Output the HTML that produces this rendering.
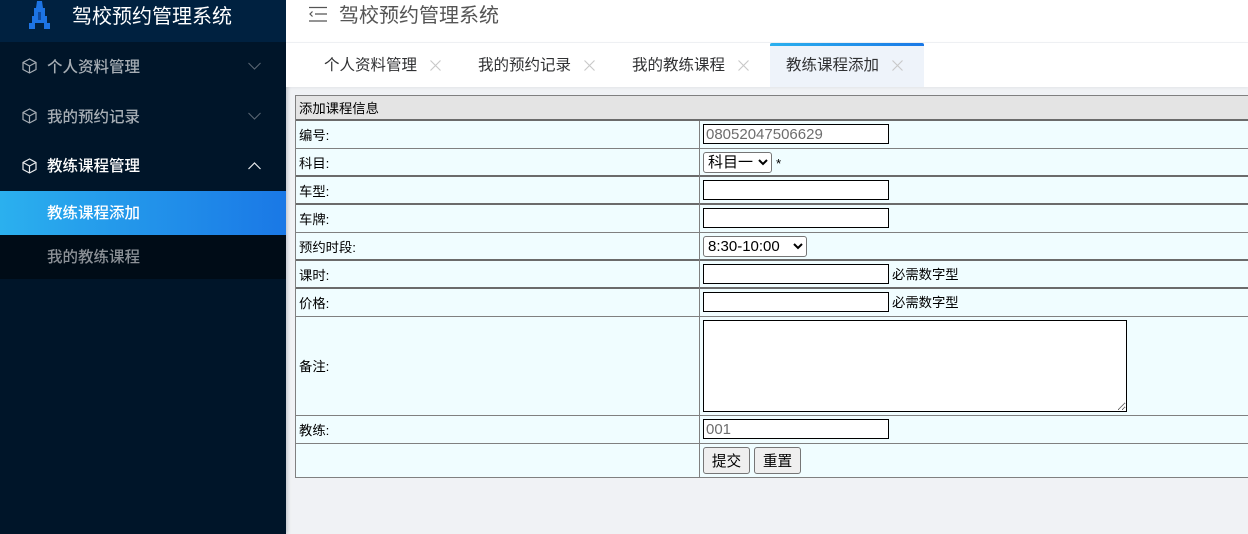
<!DOCTYPE html>
<html lang="zh"><head><meta charset="utf-8"><title>驾校预约管理系统</title>
<style>
*{box-sizing:border-box}
html,body{margin:0;padding:0;width:1248px;height:534px;overflow:hidden;background:#f0f2f5;font-family:"Liberation Sans","Noto Sans CJK SC",sans-serif}
.a{position:absolute;white-space:nowrap}
#side{left:0;top:0;width:286px;height:534px;background:#001529;box-shadow:1px 0 4px rgba(0,21,41,.25)}
#logo{left:0;top:0;width:286px;height:42px;background:#002140}
.m{font-size:15.5px;line-height:20px;font-weight:500;color:#a6adb4}
.hl{left:0;width:286px}
.l{left:296px;width:952px;background:#808080;height:1px}
.d{height:2px;background:#6b6b6b}
.t{left:299px;font-size:13.33px;line-height:16px;color:#000}
input.i{position:absolute;left:703px;width:186px;height:20px;border:1.5px solid #000;border-radius:0;background:#fff;padding:1px 2px;margin:0;font:15px "Liberation Sans",sans-serif;color:#6d6d6d;outline:0}
select{position:absolute;left:703px;height:21px;margin:0;font:15px "Liberation Sans","Noto Sans CJK SC",sans-serif;background:#fff;border:1px solid #767676;border-radius:3px;color:#000;padding:0}
button{position:absolute;top:447px;height:27px;margin:0;padding:0;font:14.67px "Liberation Sans","Noto Sans CJK SC",sans-serif;color:#000;background:#efefef;border:1px solid #767676;border-radius:3px}
.tab{font-size:15.5px;line-height:20px;top:56px;color:#303133}
</style></head><body>

<div class="a" id="side"></div>
<div class="a" id="logo"></div>
<svg class="a" style="left:0;top:0" width="60" height="32" viewBox="0 0 60 32"><path fill="#1d74e4" d="M37 1h5l1 7h2v8h2v7h3v6h-6v-6h-9v6h-6v-6h3v-7h2V8h2z"/><path fill="#0e4a9e" d="M38 12h3v8h-3z"/></svg>
<div class="a" style="left:72px;top:3px;font-size:20px;line-height:28px;color:#fff">驾校预约管理系统</div>

<svg class="a" style="left:22px;top:58px" width="15" height="16" viewBox="0 0 15 16" fill="none" stroke="#a6adb4" stroke-width="1.200"><path d="M7.500 1 14 4.500v7L7.500 15 1 11.500v-7zM1 4.500 7.500 8 14 4.500M7.500 8v7"/></svg>
<div class="a m" style="left:47px;top:58px">个人资料管理</div>
<svg class="a" style="left:248px;top:62px" width="13" height="8" viewBox="0 0 13 8" fill="none" stroke="#5c6875" stroke-width="1"><path d="M.5 1 6.500 7l6-6"/></svg>

<svg class="a" style="left:22px;top:108px" width="15" height="16" viewBox="0 0 15 16" fill="none" stroke="#a6adb4" stroke-width="1.200"><path d="M7.500 1 14 4.500v7L7.500 15 1 11.500v-7zM1 4.500 7.500 8 14 4.500M7.500 8v7"/></svg>
<div class="a m" style="left:47px;top:108px">我的预约记录</div>
<svg class="a" style="left:248px;top:112px" width="13" height="8" viewBox="0 0 13 8" fill="none" stroke="#5c6875" stroke-width="1"><path d="M.5 1 6.500 7l6-6"/></svg>

<svg class="a" style="left:22px;top:158px" width="15" height="16" viewBox="0 0 15 16" fill="none" stroke="#e8eaec" stroke-width="1.200"><path d="M7.500 1 14 4.500v7L7.500 15 1 11.500v-7zM1 4.500 7.500 8 14 4.500M7.500 8v7"/></svg>
<div class="a m" style="left:47px;top:157px;color:#fff">教练课程管理</div>
<svg class="a" style="left:248px;top:162px" width="13" height="8" viewBox="0 0 13 8" fill="none" stroke="#e8eaec" stroke-width="1.200"><path d="M.5 7 6.500 1l6 6"/></svg>

<div class="a hl" style="top:191px;height:44px;background:linear-gradient(90deg,#2bb0ee,#1a78e6)"></div>
<div class="a m" style="left:47px;top:204px;color:#fff">教练课程添加</div>
<div class="a hl" style="top:235px;height:44px;background:#000c17"></div>
<div class="a m" style="left:47px;top:248px;color:#8c9197">我的教练课程</div>

<div class="a" style="left:286px;top:0;width:962px;height:43px;background:#fff;border-bottom:1px solid #f0f2f5"></div>
<svg class="a" style="left:309px;top:6px" width="19" height="17" viewBox="0 0 19 17" fill="none" stroke="#555" stroke-width="1.200"><path d="M0 1.500h18M6 8h12M0 15h18M3.500 5.500 1 8l2.500 2.500"/></svg>
<div class="a" style="left:339px;top:2px;font-size:20px;line-height:28px;color:#555">驾校预约管理系统</div>

<div class="a" style="left:286px;top:43px;width:962px;height:44px;background:#fff;box-shadow:0 1px 3px rgba(0,0,0,.06)"></div>
<div class="a" style="left:770px;top:43px;width:154px;height:44px;background:#eef3fa"></div>
<div class="a" style="left:770px;top:43px;width:154px;height:3px;border-radius:2px 2px 0 0;background:linear-gradient(90deg,#2bb0ee,#1a78e6)"></div>
<div class="a tab" style="left:324px">个人资料管理</div>
<div class="a tab" style="left:478px">我的预约记录</div>
<div class="a tab" style="left:632px">我的教练课程</div>
<div class="a tab" style="left:786px">教练课程添加</div>
<svg class="a" style="left:430px;top:60px" width="11" height="11" viewBox="0 0 11 11" stroke="#c8c8c8" stroke-width="1.100"><path d="M.5.500l10 10M10.500.500l-10 10"/></svg>
<svg class="a" style="left:584px;top:60px" width="11" height="11" viewBox="0 0 11 11" stroke="#c8c8c8" stroke-width="1.100"><path d="M.5.500l10 10M10.500.500l-10 10"/></svg>
<svg class="a" style="left:738px;top:60px" width="11" height="11" viewBox="0 0 11 11" stroke="#c8c8c8" stroke-width="1.100"><path d="M.5.500l10 10M10.500.500l-10 10"/></svg>
<svg class="a" style="left:892px;top:60px" width="11" height="11" viewBox="0 0 11 11" stroke="#c8c8c8" stroke-width="1.100"><path d="M.5.500l10 10M10.500.500l-10 10"/></svg>

<div class="a" style="left:295px;top:95px;width:953px;height:383px;background:#f0fdff;border:1px solid #808080;border-right:0"></div>
<div class="a" style="left:296px;top:96px;width:952px;height:23px;background:#e4e4e4"></div>
<div class="a l d" style="top:119px"></div>
<div class="a l" style="top:148px"></div>
<div class="a l d" style="top:175px"></div>
<div class="a l d" style="top:203px"></div>
<div class="a l" style="top:232px"></div>
<div class="a l d" style="top:259px"></div>
<div class="a l d" style="top:287px"></div>
<div class="a l" style="top:316px"></div>
<div class="a l" style="top:415px"></div>
<div class="a l" style="top:443px"></div>
<div class="a" style="left:699px;top:121px;width:1px;height:356px;background:#808080"></div>

<div class="a t" style="top:101px">添加课程信息</div>
<div class="a t" style="top:128px">编号:</div>
<div class="a t" style="top:156px">科目:</div>
<div class="a t" style="top:184px">车型:</div>
<div class="a t" style="top:212px">车牌:</div>
<div class="a t" style="top:240px">预约时段:</div>
<div class="a t" style="top:268px">课时:</div>
<div class="a t" style="top:296px">价格:</div>
<div class="a t" style="top:359px">备注:</div>
<div class="a t" style="top:423px">教练:</div>

<input class="i" style="top:124px" value="08052047506629">
<select style="top:152px;width:69px"><option>科目一</option></select>
<div class="a t" style="left:776px;top:156px">*</div>
<input class="i" style="top:180px">
<input class="i" style="top:208px">
<select style="top:236px;width:104px"><option>8:30-10:00</option></select>
<input class="i" style="top:264px">
<div class="a t" style="left:892px;top:267px">必需数字型</div>
<input class="i" style="top:292px">
<div class="a t" style="left:892px;top:295px">必需数字型</div>
<textarea class="a" style="left:703px;top:320px;width:424px;height:92px;border:1.500px solid #000;border-radius:0;background:#fff;margin:0;padding:2px;outline:0"></textarea>
<input class="i" style="top:419px" value="001">
<button style="left:703px;width:47px">提交</button>
<button style="left:754px;width:47px">重置</button>
</body></html>
